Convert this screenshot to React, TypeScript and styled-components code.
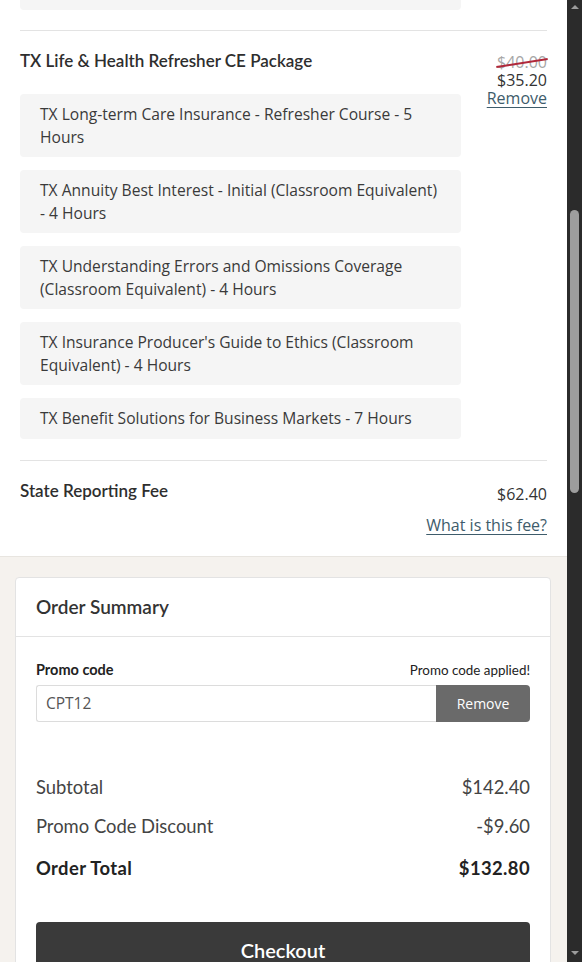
import styled, { createGlobalStyle } from "styled-components";

const GlobalStyle = createGlobalStyle`
  html, body {
    margin: 0;
    padding: 0;
    overflow: hidden;
    background: #ffffff;
  }
  * {
    box-sizing: border-box;
  }
`;

const HEADING = `"Lato", "Liberation Sans", sans-serif`;
const BODY = `"Open Sans", "Noto Sans", "Liberation Sans", sans-serif`;

const Page = styled.div`
  display: flex;
  width: 582px;
  height: 962px;
  overflow: hidden;
`;

const Main = styled.div`
  flex: 1;
  display: flex;
  flex-direction: column;
  min-width: 0;
  background: #f5f2ee;
`;

const CartSection = styled.section`
  background: #ffffff;
  padding: 0 20px;
  border-bottom: 1px solid #e8e5e0;
`;

const PrevItemTail = styled.div`
  width: 441px;
  height: 10px;
  background: #f5f5f5;
  border-radius: 0 0 4px 4px;
  margin-bottom: 20px;
`;

const CartItem = styled.div<{ $bottom: number }>`
  display: flex;
  justify-content: space-between;
  border-top: 1px solid #e3e3e3;
  padding: 20px 0 ${(p) => p.$bottom}px;
`;

const ItemInfo = styled.div`
  width: 441px;
`;

const ItemTitle = styled.h3`
  margin: 0;
  font-family: ${HEADING};
  font-size: 17px;
  font-weight: 600;
  line-height: 20px;
  color: #2e2e2e;
`;

const CourseList = styled.div`
  display: flex;
  flex-direction: column;
  gap: 13px;
  margin-top: 23px;
`;

const Course = styled.div`
  background: #f5f5f5;
  border-radius: 4px;
  padding: 9px 20px;
  font-family: ${BODY};
  font-size: 15.6px;
  line-height: 22.5px;
  color: #3a3a3a;
`;

const PriceCol = styled.div<{ $top: number }>`
  display: flex;
  flex-direction: column;
  align-items: flex-end;
  padding-top: ${(p) => p.$top}px;
  font-family: ${BODY};
  font-size: 16px;
  line-height: 18px;
  color: #333333;
`;

const OldPrice = styled.span`
  position: relative;
  color: #a6a6a6;

  &::after {
    content: "";
    position: absolute;
    left: -1px;
    right: -1px;
    top: 50%;
    height: 2px;
    background: #b0283a;
    transform: rotate(-9deg);
  }
`;

const TextLink = styled.a<{ $gap?: number }>`
  margin-top: ${(p) => p.$gap ?? 0}px;
  color: #3e5c6b;
  text-decoration: underline;
  text-underline-offset: 3px;
  text-decoration-thickness: 1px;
  cursor: pointer;
`;

const SummaryArea = styled.div`
  flex: 1;
  padding: 20px 16px 0 15px;
`;

const SummaryCard = styled.div`
  background: #ffffff;
  border: 1px solid #e3e3e3;
  border-radius: 4px;
`;

const SummaryHeader = styled.div`
  display: flex;
  align-items: center;
  height: 59px;
  padding: 0 20px;
  border-bottom: 1px solid #e3e3e3;
  font-family: ${HEADING};
  font-size: 19px;
  font-weight: 600;
  color: #333333;
`;

const SummaryBody = styled.div`
  padding: 25px 20px 0;
`;

const PromoLabelRow = styled.div`
  display: flex;
  justify-content: space-between;
  align-items: center;
  line-height: 16px;
  font-family: ${HEADING};
  color: #222222;
`;

const PromoLabel = styled.label`
  font-size: 14.5px;
  font-weight: 700;
`;

const PromoNote = styled.span`
  font-size: 13.4px;
`;

const PromoForm = styled.div`
  display: flex;
  height: 37px;
  margin-top: 7px;
`;

const PromoInput = styled.input`
  flex: 1;
  min-width: 0;
  height: 100%;
  border: 1px solid #dcdcdc;
  border-right: none;
  border-radius: 3px 0 0 3px;
  padding: 0 9px;
  font-family: ${BODY};
  font-size: 15.5px;
  color: #555555;
  background: #ffffff;
  outline: none;
`;

const PromoButton = styled.button`
  width: 94px;
  height: 100%;
  border: none;
  border-radius: 0 4px 4px 0;
  background: #6a6a6a;
  color: #ffffff;
  font-family: ${BODY};
  font-size: 14px;
`;

const Totals = styled.div`
  display: flex;
  flex-direction: column;
  margin-top: 52px;
`;

const TotalRow = styled.div<{ $strong?: boolean; $gap: number }>`
  display: flex;
  justify-content: space-between;
  margin-top: ${(p) => p.$gap}px;
  font-family: ${HEADING};
  font-size: 18.4px;
  line-height: 26px;
  font-weight: ${(p) => (p.$strong ? 700 : 400)};
  letter-spacing: ${(p) => (p.$strong ? "0.4px" : "0")};
  color: ${(p) => (p.$strong ? "#222222" : "#444444")};
`;

const CheckoutButton = styled.button`
  display: block;
  width: 100%;
  height: 56px;
  margin-top: 41px;
  border: none;
  border-radius: 4px;
  background: #3a3a3a;
  color: #ffffff;
  font-family: ${HEADING};
  font-size: 20px;
  font-weight: 600;
`;

/* window scrollbar as it shows in the screenshot */
const Scrollbar = styled.div`
  width: 15px;
  display: flex;
  flex-direction: column;
  align-items: center;
  background: #2b2b2b;
`;

const Arrow = styled.div<{ $down?: boolean }>`
  width: 0;
  height: 0;
  margin: ${(p) => (p.$down ? "auto 0 7px" : "5px 0 0")};
  border-left: 4px solid transparent;
  border-right: 4px solid transparent;
  ${(p) =>
    p.$down
      ? "border-top: 4px solid #9c9c9c;"
      : "border-bottom: 4px solid #9c9c9c;"}
`;

const Thumb = styled.div`
  width: 9px;
  height: 283px;
  margin-top: 201px;
  border-radius: 5px;
  background: #9d9d9d;
`;

const courses = [
  "TX Long-term Care Insurance - Refresher Course - 5 Hours",
  "TX Annuity Best Interest - Initial (Classroom Equivalent) - 4 Hours",
  "TX Understanding Errors and Omissions Coverage (Classroom Equivalent) - 4 Hours",
  "TX Insurance Producer's Guide to Ethics (Classroom Equivalent) - 4 Hours",
  "TX Benefit Solutions for Business Markets - 7 Hours",
];

const totals = [
  { label: "Subtotal", value: "$142.40", gap: 0 },
  { label: "Promo Code Discount", value: "-$9.60", gap: 13 },
  { label: "Order Total", value: "$132.80", gap: 16, strong: true },
];

const App = () => {
  return (
    <>
      <GlobalStyle />
      <Page>
        <Main>
          <CartSection>
            <PrevItemTail />

            {/* Package */}
            <CartItem $bottom={21}>
              <ItemInfo>
                <ItemTitle>TX Life &amp; Health Refresher CE Package</ItemTitle>
                <CourseList>
                  {courses.map((name) => (
                    <Course key={name}>{name}</Course>
                  ))}
                </CourseList>
              </ItemInfo>
              <PriceCol $top={2}>
                <OldPrice>$40.00</OldPrice>
                <span>$35.20</span>
                <TextLink>Remove</TextLink>
              </PriceCol>
            </CartItem>

            {/* Fee */}
            <CartItem $bottom={22}>
              <ItemTitle>State Reporting Fee</ItemTitle>
              <PriceCol $top={4}>
                <span>$62.40</span>
                <TextLink $gap={13}>What is this fee?</TextLink>
              </PriceCol>
            </CartItem>
          </CartSection>

          <SummaryArea>
            <SummaryCard>
              <SummaryHeader>Order Summary</SummaryHeader>
              <SummaryBody>
                <PromoLabelRow>
                  <PromoLabel>Promo code</PromoLabel>
                  <PromoNote>Promo code applied!</PromoNote>
                </PromoLabelRow>
                <PromoForm>
                  <PromoInput defaultValue="CPT12" readOnly />
                  <PromoButton>Remove</PromoButton>
                </PromoForm>

                <Totals>
                  {totals.map((t) => (
                    <TotalRow key={t.label} $gap={t.gap} $strong={t.strong}>
                      <span>{t.label}</span>
                      <span>{t.value}</span>
                    </TotalRow>
                  ))}
                </Totals>

                <CheckoutButton>Checkout</CheckoutButton>
              </SummaryBody>
            </SummaryCard>
          </SummaryArea>
        </Main>

        <Scrollbar>
          <Arrow />
          <Thumb />
          <Arrow $down />
        </Scrollbar>
      </Page>
    </>
  );
};

export default App;
